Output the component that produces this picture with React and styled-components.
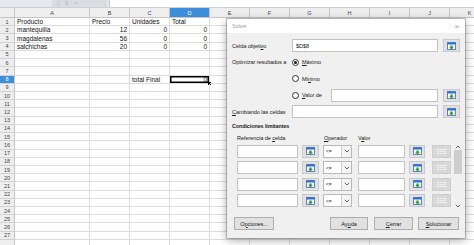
import React from "react";
import styled, { createGlobalStyle } from "styled-components";

const GlobalStyle = createGlobalStyle`
  html, body {
    margin: 0;
    padding: 0;
    background: #ffffff;
    overflow: hidden;
  }
  body {
    font-family: "Liberation Sans", Arial, sans-serif;
    color: #1a1a1a;
  }
`;

const Page = styled.div`
  position: relative;
  width: 474px;
  height: 245px;
  overflow: hidden;
  background: #ffffff;
`;

/* ---------- spreadsheet ---------- */

const Toolbar = styled.div`
  display: flex;
  height: 8px;
  background: #e5e8ec;
  box-sizing: border-box;
  border-bottom: 1px solid #c9d0d8;
`;

const ToolGroup = styled.div`
  display: flex;
  align-items: center;
  gap: 5px;
  margin-left: 52px;
  padding: 0 5px;
  width: 55px;
  box-sizing: border-box;
  background: #d9dce0;
  color: #b5b8bc;
  font-size: 6px;
  line-height: 7px;
`;

const FormulaInput = styled.div`
  flex: 1;
  margin-left: 2px;
  background: #ffffff;
  border-left: 1px solid #c4c9cf;
`;

const Sheet = styled.div`
  display: grid;
  grid-template-columns: 15px 75px repeat(10, 40px);
  grid-template-rows: 10px repeat(28, 8.23px);
  font-size: 6.5px;
`;

const Corner = styled.div`
  background: #eeeeee;
  border-right: 1px solid #c6c6c6;
  border-bottom: 1px solid #c6c6c6;
`;

const ColHeader = styled.div`
  display: flex;
  align-items: center;
  justify-content: center;
  box-sizing: border-box;
  background: ${(p) => (p.$active ? "#3d8fdc" : "#eeeeee")};
  color: ${(p) => (p.$active ? "#ffffff" : "#444444")};
  border-right: 1px solid #c6c6c6;
  border-bottom: 1px solid #c6c6c6;
  font-size: 5.5px;
`;

const RowHeader = styled.div`
  display: flex;
  align-items: center;
  justify-content: center;
  box-sizing: border-box;
  overflow: hidden;
  background: ${(p) => (p.$active ? "#3d8fdc" : "#eeeeee")};
  color: ${(p) => (p.$active ? "#ffffff" : "#444444")};
  border-right: 1px solid #c6c6c6;
  border-bottom: 1px solid #d2d2d2;
  font-size: 5.5px;
`;

const Cell = styled.div`
  position: relative;
  display: flex;
  align-items: center;
  justify-content: ${(p) => (p.$num ? "flex-end" : "flex-start")};
  box-sizing: border-box;
  padding: 0 2px;
  border-right: 1px solid #dcdcdc;
  border-bottom: 1px solid #dcdcdc;
  white-space: nowrap;
  overflow: visible;
  color: #111111;
  ${(p) =>
    p.$selected &&
    `
    box-shadow: inset 0 0 0 1.5px #000000;
  `}
`;

const FillHandle = styled.span`
  position: absolute;
  right: -2px;
  bottom: -2px;
  width: 3px;
  height: 3px;
  background: #000000;
`;

/* ---------- solver dialog ---------- */

const Dialog = styled.div`
  position: absolute;
  left: 227px;
  top: 19px;
  width: 238px;
  height: 219px;
  display: flex;
  flex-direction: column;
  background: #f0f0f0;
  box-shadow: 0 0 0 1px rgba(0, 0, 0, 0.22), 0 2px 9px rgba(0, 0, 0, 0.35);
  font-size: 5.6px;
  letter-spacing: -0.08px;
  color: #1a1a1a;
`;

const TitleBar = styled.div`
  display: flex;
  align-items: center;
  justify-content: space-between;
  height: 14px;
  padding: 0 6px 0 5px;
  background: #ffffff;
  color: #a0a0a0;
  font-size: 5.4px;
`;

const CloseX = styled.span`
  font-size: 8px;
  color: #9a9a9a;
`;

const Body = styled.div`
  display: flex;
  flex-direction: column;
  padding: 6px 5px 0 5px;
`;

const FormGrid = styled.div`
  display: grid;
  grid-template-columns: 55px 146px 17px;
  grid-template-rows: repeat(5, 13px);
  column-gap: 5px;
  row-gap: 3.5px;
  align-items: center;
`;

const Label = styled.span`
  white-space: nowrap;
`;

const Mn = styled.u`
  text-decoration-thickness: 0.5px;
  text-underline-offset: 1px;
`;

const TextInput = styled.div`
  box-sizing: border-box;
  height: 13px;
  width: ${(p) => (p.$w ? `${p.$w}px` : "100%")};
  margin-left: ${(p) => (p.$push ? "auto" : `${p.$ml || 0}px`)};
  display: flex;
  align-items: center;
  padding: 0 3px;
  background: #ffffff;
  border: 1px solid #c2c2c2;
  flex-shrink: 0;
`;

const PickButton = styled.div`
  box-sizing: border-box;
  width: ${(p) => p.$w || 17}px;
  height: 13px;
  margin-left: ${(p) => p.$ml || 0}px;
  display: flex;
  align-items: center;
  justify-content: center;
  background: #e1e1e1;
  border: 1px solid #c9c9c9;
  flex-shrink: 0;
`;

const RadioRow = styled.div`
  display: flex;
  align-items: center;
  height: 13px;
`;

const RadioDot = styled.span`
  box-sizing: border-box;
  width: 7px;
  height: 7px;
  margin-right: 3px;
  border-radius: 50%;
  border: 1px solid #333333;
  background: #ffffff;
  display: flex;
  align-items: center;
  justify-content: center;
  flex-shrink: 0;
  &::after {
    content: "";
    width: 3px;
    height: 3px;
    border-radius: 50%;
    background: ${(p) => (p.$on ? "#111111" : "transparent")};
  }
`;

const SectionTitle = styled.div`
  margin-top: 5px;
  line-height: 7px;
  font-weight: bold;
  font-size: 5.4px;
`;

const ConstraintArea = styled.div`
  display: flex;
  flex-direction: column;
  padding-left: 5px;
`;

const HeadRow = styled.div`
  display: flex;
  margin-top: 5px;
  line-height: 7px;
`;

const HeadCell = styled.span`
  width: ${(p) => (p.$w ? `${p.$w}px` : "auto")};
  white-space: nowrap;
`;

const RowsWrap = styled.div`
  display: flex;
  margin-top: 2.5px;
`;

const Rows = styled.div`
  display: flex;
  flex-direction: column;
  gap: 3.67px;
`;

const ConstraintRow = styled.div`
  display: flex;
  align-items: center;
`;

const Select = styled.div`
  box-sizing: border-box;
  width: 29px;
  height: 13px;
  margin-left: 4px;
  display: flex;
  background: #ffffff;
  border: 1px solid #b8b8b8;
  flex-shrink: 0;
`;

const SelectValue = styled.span`
  flex: 1;
  display: flex;
  align-items: center;
  padding-left: 2px;
  font-size: 5px;
`;

const SelectArrow = styled.span`
  width: 9px;
  display: flex;
  align-items: center;
  justify-content: center;
  border-left: 1px solid #d0d0d0;
  background: #f4f4f4;
`;

const RemoveButton = styled.div`
  box-sizing: border-box;
  width: 19px;
  height: 13px;
  margin-left: 7px;
  display: flex;
  align-items: center;
  justify-content: center;
  background: #d8d8d8;
  border: 1px solid #cccccc;
`;

const ScrollBar = styled.div`
  width: 8px;
  height: 63px;
  margin-left: 3px;
  display: flex;
  flex-direction: column;
  align-items: center;
  justify-content: space-between;
`;

const ScrollThumb = styled.div`
  width: 8px;
  height: 24px;
  margin-top: 1px;
  margin-bottom: auto;
  background: #cdcdcd;
`;

const ButtonBar = styled.div`
  display: flex;
  align-items: center;
  margin-top: 9.5px;
  padding-left: 2px;
  padding-right: 1px;
`;

const DialogButton = styled.div`
  box-sizing: border-box;
  width: ${(p) => p.$w}px;
  height: 13px;
  margin-left: ${(p) => (p.$auto ? "auto" : `${p.$ml || 0}px`)};
  display: flex;
  align-items: center;
  justify-content: center;
  background: #e1e1e1;
  border: 1px solid #adadad;
  white-space: nowrap;
`;

const PickIcon = () => (
  <svg width="9" height="8" viewBox="0 0 9 8">
    <rect x="0.5" y="0.5" width="8" height="7" fill="#ffffff" stroke="#5b82c2" />
    <rect x="0.5" y="0.5" width="8" height="2" fill="#2f6fd0" />
    <path d="M3.3 3.6h2.4v1.6h1.2L4.5 7.5 2.1 5.2h1.2z" fill="#3c9b3c" />
  </svg>
);

const Chevron = ({ up }) => (
  <svg width="6" height="4" viewBox="0 0 6 4">
    <path
      d={up ? "M0.8 3.2L3 1L5.2 3.2" : "M0.8 0.8L3 3L5.2 0.8"}
      fill="none"
      stroke="#555555"
      strokeWidth="0.9"
    />
  </svg>
);

const RemoveIcon = () => (
  <svg width="9" height="5" viewBox="0 0 9 5">
    <rect x="0.5" y="0.5" width="8" height="4" fill="none" stroke="#efefef" />
    <path d="M2 2.5h5" stroke="#efefef" />
  </svg>
);

const columns = ["A", "B", "C", "D", "E", "F", "G", "H", "I", "J", "K"];

const data = {
  1: { A: "Producto", B: "Precio", C: "Unidades", D: "Total" },
  2: { A: "mantequilla", B: 12, C: 0, D: 0 },
  3: { A: "magdalenas", B: 56, C: 0, D: 0 },
  4: { A: "salchichas", B: 20, C: 0, D: 0 },
  8: { C: "total Final", D: 0 },
};

const Spreadsheet = () => {
  const rows = Array.from({ length: 28 }, (_, i) => i + 1);
  return (
    <Sheet>
      <Corner />
      {columns.map((c) => (
        <ColHeader key={c} $active={c === "D"}>
          {c}
        </ColHeader>
      ))}
      {rows.map((r) => (
        <React.Fragment key={r}>
          <RowHeader $active={r === 8}>{r < 28 ? r : ""}</RowHeader>
          {columns.map((c) => {
            const v = data[r] ? data[r][c] : undefined;
            const selected = r === 8 && c === "D";
            return (
              <Cell key={c} $num={typeof v === "number"} $selected={selected}>
                {v}
                {selected && <FillHandle />}
              </Cell>
            );
          })}
        </React.Fragment>
      ))}
    </Sheet>
  );
};

const SolverDialog = () => (
  <Dialog>
    <TitleBar>
      <span>Solver</span>
      <CloseX>×</CloseX>
    </TitleBar>
    <Body>
      <FormGrid>
        <Label>
          Celda objeti<Mn>v</Mn>o
        </Label>
        <TextInput>$D$8</TextInput>
        <PickButton>
          <PickIcon />
        </PickButton>

        <Label>Optimizar resultados a</Label>
        <RadioRow>
          <RadioDot $on />
          <span>
            <Mn>M</Mn>áximo
          </span>
        </RadioRow>
        <span />

        <span />
        <RadioRow>
          <RadioDot />
          <span>
            Mí<Mn>n</Mn>imo
          </span>
        </RadioRow>
        <span />

        <span />
        <RadioRow>
          <RadioDot />
          <span>
            <Mn>V</Mn>alor de
          </span>
          <TextInput $w={107} $push />
        </RadioRow>
        <PickButton>
          <PickIcon />
        </PickButton>

        <Label>
          <Mn>C</Mn>ambiando las celdas
        </Label>
        <TextInput />
        <PickButton>
          <PickIcon />
        </PickButton>
      </FormGrid>

      <SectionTitle>Condiciones limitantes</SectionTitle>

      <ConstraintArea>
        <HeadRow>
          <HeadCell $w={87}>
            Referencia de <Mn>c</Mn>elda
          </HeadCell>
          <HeadCell $w={34}>
            <Mn>O</Mn>perador
          </HeadCell>
          <HeadCell>
            V<Mn>a</Mn>lor
          </HeadCell>
        </HeadRow>

        <RowsWrap>
          <Rows>
            {[0, 1, 2, 3].map((i) => (
              <ConstraintRow key={i}>
                <TextInput $w={61} />
                <PickButton $ml={4}>
                  <PickIcon />
                </PickButton>
                <Select>
                  <SelectValue>&lt;=</SelectValue>
                  <SelectArrow>
                    <Chevron />
                  </SelectArrow>
                </Select>
                <TextInput $w={47} $ml={6} />
                <PickButton $ml={4} $w={16}>
                  <PickIcon />
                </PickButton>
                <RemoveButton>
                  <RemoveIcon />
                </RemoveButton>
              </ConstraintRow>
            ))}
          </Rows>
          <ScrollBar>
            <Chevron up />
            <ScrollThumb />
            <Chevron />
          </ScrollBar>
        </RowsWrap>
      </ConstraintArea>

      <ButtonBar>
        <DialogButton $w={40}>
          O<Mn>p</Mn>ciones...
        </DialogButton>
        <DialogButton $w={38} $auto>
          Ay<Mn>u</Mn>da
        </DialogButton>
        <DialogButton $w={39} $ml={6}>
          <Mn>C</Mn>errar
        </DialogButton>
        <DialogButton $w={41} $ml={5}>
          <Mn>S</Mn>olucionar
        </DialogButton>
      </ButtonBar>
    </Body>
  </Dialog>
);

const App = () => (
  <Page>
    <GlobalStyle />
    <Toolbar>
      <ToolGroup>
        <span>▯</span>
        <span>Σ</span>
        <span>=</span>
      </ToolGroup>
      <FormulaInput />
    </Toolbar>
    <Spreadsheet />
    <SolverDialog />
  </Page>
);

export default App;
